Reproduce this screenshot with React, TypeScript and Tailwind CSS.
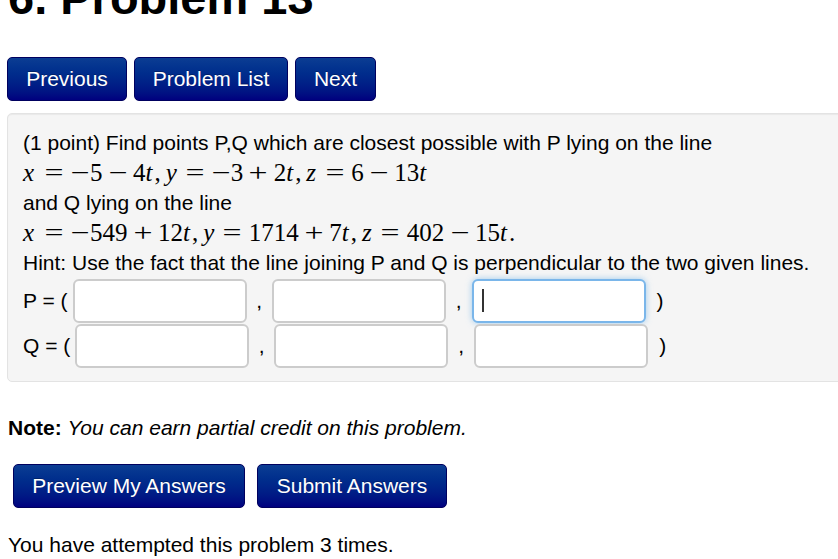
const vw: Record<string, string> = {
  x: "w-[0.572em]",
  y: "w-[0.49em]",
  z: "w-[0.465em]",
  t: "w-[0.361em]",
};

function V({ c }: { c: string }) {
  return <span className={`inline-block italic ${vw[c]}`}>{c}</span>;
}

// operator glyph stretched to the width of the TeX symbol
function G({ c }: { c: string }) {
  return <span className="inline-block scale-x-[1.35]">{c}</span>;
}

function Rel() {
  return (
    <span className="inline-block w-[0.778em] mx-[0.278em] text-center">
      <G c="=" />
    </span>
  );
}

function Bin({ c }: { c: string }) {
  return (
    <span className="inline-block w-[0.778em] mx-[0.222em] text-center">
      <G c={c} />
    </span>
  );
}

function Neg() {
  return (
    <span className="inline-block w-[0.778em] text-center">
      <G c="−" />
    </span>
  );
}

function Comma() {
  return <span className="inline-block w-[0.278em] mr-[0.167em]">,</span>;
}

function Math({ children }: { children: React.ReactNode }) {
  return (
    <div className="font-['Liberation_Serif',serif] text-[25px] leading-[30px] whitespace-nowrap">
      {children}
    </div>
  );
}

function NavButton({ label, width }: { label: string; width: string }) {
  return (
    <button
      className={`${width} h-[44px] flex items-center justify-center rounded-[5px] border border-[#00005e] bg-linear-to-b from-[#0c3d93] to-[#00007f] text-white text-[21px] [text-shadow:0_-1px_0_rgba(0,0,0,0.25)]`}
    >
      {label}
    </button>
  );
}

function Field({ focused }: { focused?: boolean }) {
  return (
    <div
      className={
        focused
          ? "w-[174px] h-[44px] flex items-center pl-[8px] rounded-[6px] bg-white border-2 border-[#7ab6ea] shadow-[0_0_6px_rgba(102,175,233,0.6)]"
          : "w-[174px] h-[44px] rounded-[6px] bg-white border-2 border-[#cccccc]"
      }
    >
      {focused && <div className="w-[2px] h-[23px] bg-[#333]" />}
    </div>
  );
}

function AnswerRow({ name, focusLast }: { name: string; focusLast?: boolean }) {
  return (
    <div className="flex items-center h-[45px]">
      <span className="mr-[5px]">{name} = (</span>
      <Field />
      <span className="w-[25px] text-center">,</span>
      <Field />
      <span className="w-[26px] text-center">,</span>
      <Field focused={focusLast} />
      <span className="ml-[11px]">)</span>
    </div>
  );
}

export default function App() {
  return (
    <div className="w-[838px] h-[559px] overflow-hidden bg-white text-black font-['Liberation_Sans',Arial,sans-serif] text-[21px]">
      <div className="pl-[7px]">
        <h1 className="text-[47px] font-bold leading-none -mt-[26px] pl-[1px] whitespace-nowrap">
          6. Problem 13
        </h1>

        <div className="flex gap-[7px] mt-[36px]">
          <NavButton label="Previous" width="w-[120px]" />
          <NavButton label="Problem List" width="w-[154px]" />
          <NavButton label="Next" width="w-[81px]" />
        </div>

        <div className="mt-[12px] w-[850px] rounded-[5px] border border-[#e3e3e3] bg-[#f5f5f5] shadow-[inset_0_1px_1px_rgba(0,0,0,0.05)] pt-[14px] pb-[13px] px-[15px] leading-[30px]">
          <div className="whitespace-nowrap">
            (1 point) Find points P,Q which are closest possible with P lying on the line
          </div>
          <Math>
            <V c="x" />
            <Rel />
            <Neg />5<Bin c="−" />4<V c="t" />
            <Comma />
            <V c="y" />
            <Rel />
            <Neg />3<Bin c="+" />2<V c="t" />
            <Comma />
            <V c="z" />
            <Rel />6<Bin c="−" />13<V c="t" />
          </Math>
          <div>and Q lying on the line</div>
          <Math>
            <V c="x" />
            <Rel />
            <Neg />549<Bin c="+" />12<V c="t" />
            <Comma />
            <V c="y" />
            <Rel />1714<Bin c="+" />7<V c="t" />
            <Comma />
            <V c="z" />
            <Rel />402<Bin c="−" />15<V c="t" />
            <span>.</span>
          </Math>
          <div className="whitespace-nowrap">
            Hint: Use the fact that the line joining P and Q is perpendicular to the two given lines.
          </div>
          <AnswerRow name="P" focusLast />
          <AnswerRow name="Q" />
        </div>

        <p className="mt-[31px] pl-[1px] leading-[30px]">
          <span className="font-bold">Note:</span> <i>You can earn partial credit on this problem.</i>
        </p>

        <div className="flex gap-[12px] mt-[21px] ml-[6px]">
          <NavButton label="Preview My Answers" width="w-[232px]" />
          <NavButton label="Submit Answers" width="w-[190px]" />
        </div>

        <p className="mt-[22px] pl-[1px] leading-[30px]">You have attempted this problem 3 times.</p>
      </div>
    </div>
  );
}
